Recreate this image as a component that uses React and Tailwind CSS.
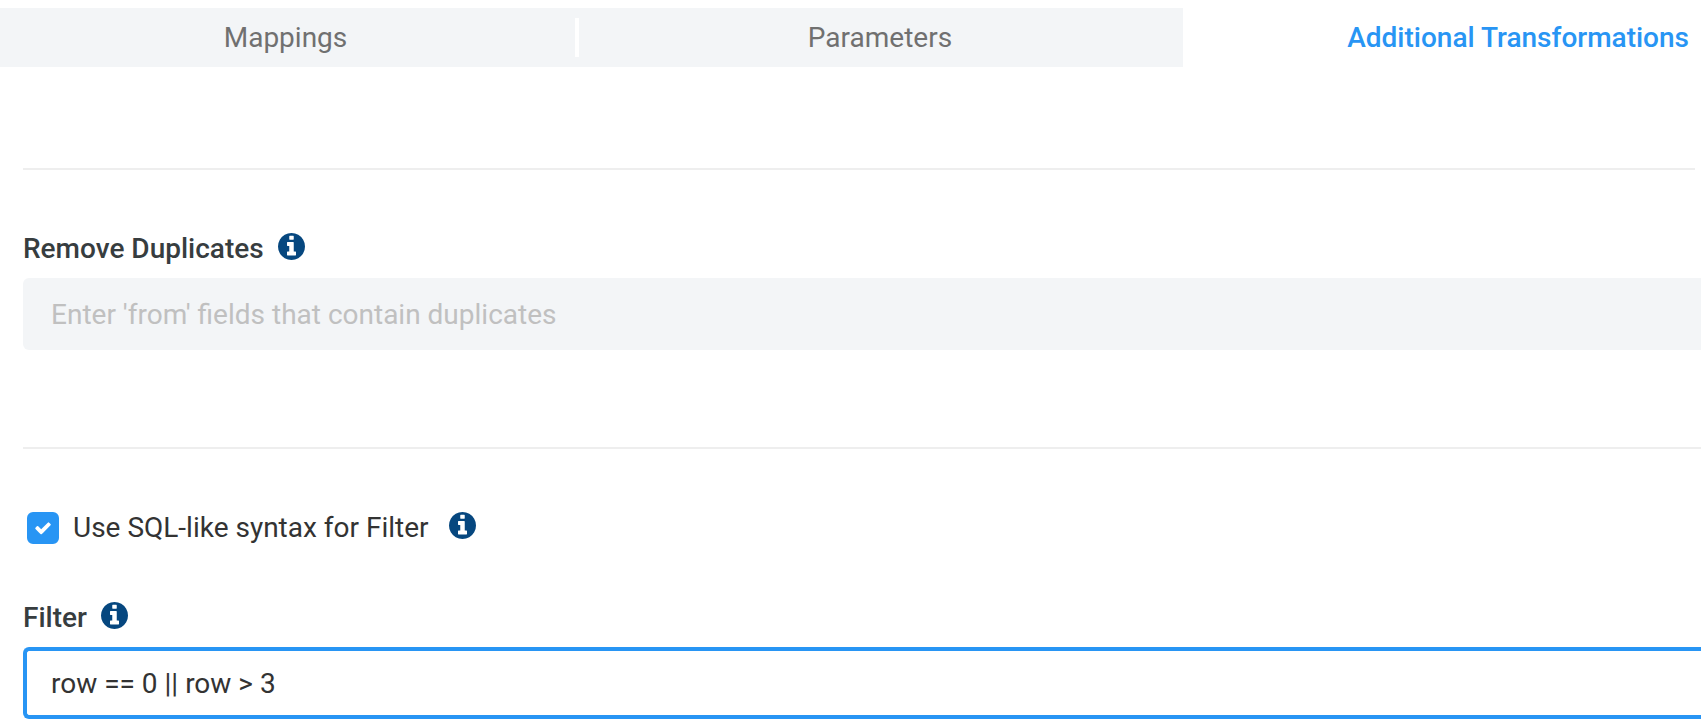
import { useState } from "react";

function InfoButton({ label }) {
  return (
    <button type="button" aria-label={label} className="shrink-0 self-start pt-0.5 text-[#06477f]">
      <svg viewBox="0 128 1536 1536" className="size-[27px]" fill="currentColor" aria-hidden="true">
        <path d="M1024 1376v-160q0-14-9-23t-23-9h-96v-512q0-14-9-23t-23-9h-320q-14 0-23 9t-9 23v160q0 14 9 23t23 9h96v320h-96q-14 0-23 9t-9 23v160q0 14 9 23t23 9h448q14 0 23-9t9-23zm-128-896v-160q0-14-9-23t-23-9h-192q-14 0-23 9t-9 23v160q0 14 9 23t23 9h192q14 0 23-9t9-23zm640 416q0 209-103 385.5t-279.5 279.5-385.5 103-385.5-103-279.5-279.5-103-385.5 103-385.5 279.5-279.5 385.5-103 385.5 103 279.5 279.5 103 385.5z" />
      </svg>
    </button>
  );
}

function Tabs() {
  return (
    <div role="tablist" className="-ml-1.5 grid h-[59px] grid-cols-[583fr_606fr_518fr]">
      <button
        type="button"
        role="tab"
        aria-selected="false"
        className="relative bg-[#f3f5f7] text-[#707070]"
      >
        Mappings
        {/* divider sits over the seam between the two inactive tabs */}
        <span className="absolute inset-y-2.5 -right-0.5 z-10 w-1 bg-white" />
      </button>
      <button
        type="button"
        role="tab"
        aria-selected="false"
        className="bg-[#f3f5f7] text-[#707070]"
      >
        Parameters
      </button>
      <button
        type="button"
        role="tab"
        aria-selected="true"
        className="pr-3 text-right font-medium whitespace-nowrap text-[#2895f4]"
      >
        Additional Transformations
      </button>
    </div>
  );
}

function App() {
  const [duplicates, setDuplicates] = useState("");
  const [sqlSyntax, setSqlSyntax] = useState(true);
  const [filter, setFilter] = useState("row == 0 || row > 3");

  return (
    <main className="overflow-hidden bg-white pt-2 pb-2 font-[Roboto,sans-serif] text-[28px] leading-9 text-[#333333]">
      <Tabs />

      <form className="pl-[23px]">
        <hr className="mt-[101px] mr-1.5 border-t-2 border-[#eeeeee]" />

        <section className="pt-[61px]">
          <div className="flex items-center gap-3.5 pb-[11px]">
            <label htmlFor="duplicates" className="font-medium text-[#373d3f]">
              Remove Duplicates
            </label>
            <InfoButton label="About removing duplicates" />
          </div>
          <input
            id="duplicates"
            type="text"
            value={duplicates}
            onChange={(e) => setDuplicates(e.target.value)}
            placeholder="Enter 'from' fields that contain duplicates"
            className="block h-[72px] w-full rounded-l-md bg-[#f3f5f7] px-7 outline-none placeholder:text-[#c0c0c0]"
          />
        </section>

        <hr className="mt-[97px] border-t-2 border-[#eeeeee]" />

        <section className="pt-[61px]">
          <div className="flex items-center gap-5 pl-1">
            <label className="flex items-center gap-3.5">
              <span className="grid size-8 place-items-center">
                <input
                  type="checkbox"
                  checked={sqlSyntax}
                  onChange={(e) => setSqlSyntax(e.target.checked)}
                  className="col-start-1 row-start-1 size-8 appearance-none rounded-md border-2 border-[#c0c0c0] checked:border-[#2895f4] checked:bg-[#2895f4]"
                />
                {sqlSyntax && (
                  <svg
                    viewBox="0 0 1792 1792"
                    className="pointer-events-none col-start-1 row-start-1 size-[18px]"
                    fill="white"
                    aria-hidden="true"
                  >
                    <path d="M1671 566q0 40-28 68l-724 724-136 136q-28 28-68 28t-68-28l-136-136-362-362q-28-28-28-68t28-68l136-136q28-28 68-28t68 28l294 295 656-657q28-28 68-28t68 28l136 136q28 28 28 68z" />
                  </svg>
                )}
              </span>
              Use SQL-like syntax for Filter
            </label>
            <InfoButton label="About SQL-like syntax" />
          </div>

          <div className="flex items-center gap-3.5 pt-[54px] pb-[11px]">
            <label htmlFor="filter" className="font-medium text-[#373d3f]">
              Filter
            </label>
            <InfoButton label="About the filter" />
          </div>
          <input
            id="filter"
            type="text"
            value={filter}
            onChange={(e) => setFilter(e.target.value)}
            className="block h-[72px] w-full rounded-l-md border-4 border-r-0 border-[#2895f4] bg-white px-6 outline-none"
          />
        </section>
      </form>
    </main>
  );
}

export default App;
